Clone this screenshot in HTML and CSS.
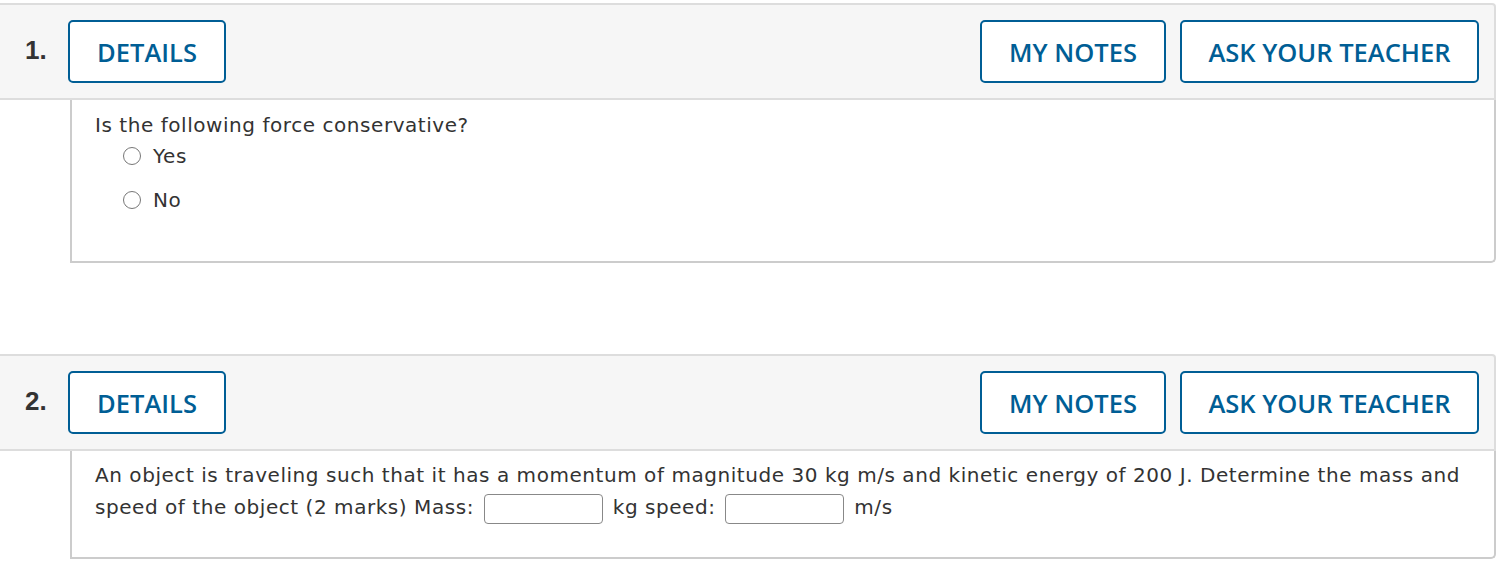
FILE: index.html
```html
<!DOCTYPE html>
<html>
<head>
<meta charset="utf-8">
<link rel="stylesheet" href="styles.css">
</head>
<body>
<div class="question q1">
  <div class="q-header">
    <span class="q-num">1.</span>
    <button class="btn btn-details">DETAILS</button>
    <div class="spacer"></div>
    <button class="btn btn-notes">MY NOTES</button>
    <button class="btn btn-ask">ASK YOUR TEACHER</button>
  </div>
  <div class="q-body q-body1">
    <div class="q-text">Is the following force conservative?</div>
    <div class="options">
      <label class="opt"><span class="radio"></span>Yes</label>
      <label class="opt"><span class="radio"></span>No</label>
    </div>
  </div>
</div>
<div class="question q2">
  <div class="q-header">
    <span class="q-num">2.</span>
    <button class="btn btn-details">DETAILS</button>
    <div class="spacer"></div>
    <button class="btn btn-notes">MY NOTES</button>
    <button class="btn btn-ask">ASK YOUR TEACHER</button>
  </div>
  <div class="q-body q-body2">
    <div class="q-text2">An object is traveling such that it has a momentum of magnitude 30 kg m/s and kinetic energy of 200 J. Determine the mass and speed of the object (2 marks) Mass: <input type="text" class="field"> kg speed: <input type="text" class="field"> m/s</div>
  </div>
</div>
</body>
</html>
```
FILE: styles.css
```css
html, body {
  margin: 0;
  padding: 0;
  background: #ffffff;
}
body {
  width: 1504px;
  height: 568px;
  overflow: hidden;
  font-family: "DejaVu Sans", Verdana, sans-serif;
  color: #333333;
}
.question {
  width: 1496px;
}
.q1 {
  padding-top: 3px;
}
.q2 {
  margin-top: 91px;
}
.q-header {
  display: flex;
  align-items: center;
  box-sizing: border-box;
  height: 97px;
  background: #f6f6f6;
  border-top: 2px solid #dddddd;
  border-right: 2px solid #dddddd;
  border-bottom: 2px solid #dddddd;
  border-top-right-radius: 4px;
  padding: 0 15px 0 25px;
}
.q-num {
  font-family: "Liberation Sans", Arial, sans-serif;
  font-weight: bold;
  font-size: 26px;
  color: #333333;
  width: 43px;
  margin-top: -2px;
}
.spacer {
  flex: 1;
}
.btn {
  box-sizing: border-box;
  height: 63px;
  background: #ffffff;
  border: 2px solid #005e95;
  border-radius: 5px;
  color: #005e95;
  font-family: "Open Sans", sans-serif;
  font-weight: 600;
  font-size: 25.5px;
  padding: 0;
  margin: 0;
}
.btn-details {
  width: 158px;
}
.btn-notes {
  width: 186px;
  margin-right: 14px;
}
.btn-ask {
  width: 299px;
}
.q-body {
  box-sizing: border-box;
  margin-left: 70px;
  width: 1426px;
  border-left: 2px solid #cccccc;
  border-right: 2px solid #cccccc;
  border-bottom: 2px solid #cccccc;
  border-bottom-right-radius: 5px;
  padding-left: 23px;
  font-size: 20px;
  letter-spacing: 0.55px;
}
.q-body1 {
  height: 163px;
  padding-top: 12px;
}
.q-text {
  line-height: 26px;
}
.options {
  padding-left: 28px;
  margin-top: -4px;
}
.opt {
  display: flex;
  align-items: center;
  height: 44px;
  gap: 12px;
}
.radio {
  box-sizing: border-box;
  width: 18px;
  height: 18px;
  border: 1.5px solid #777777;
  border-radius: 50%;
  background: #ffffff;
}
.q-body2 {
  height: 108px;
  padding-top: 8px;
}
.q-text2 {
  line-height: 32px;
  padding-right: 20px;
}
.field {
  display: inline-block;
  box-sizing: border-box;
  width: 119px;
  height: 30px;
  margin: 0 3px;
  padding: 0;
  border: 1.5px solid #888888;
  border-radius: 4px;
  vertical-align: middle;
  background: #ffffff;
}
```
